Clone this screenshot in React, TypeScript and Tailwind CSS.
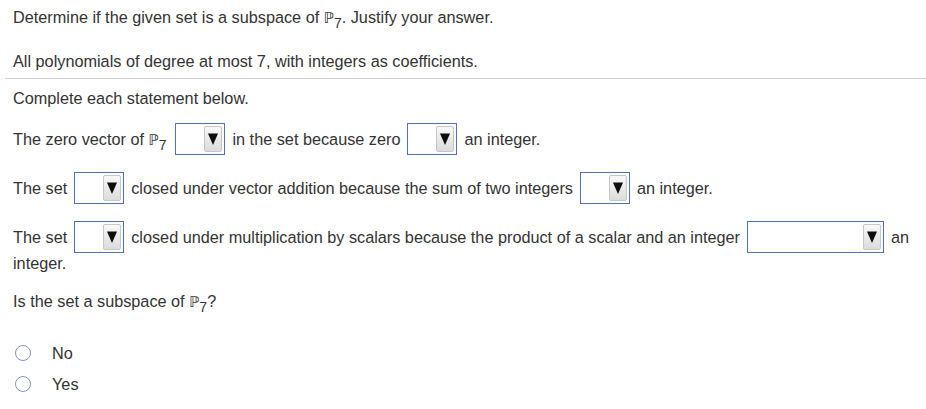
import React from "react";

function P7() {
  return (
    <span className="whitespace-nowrap">
      <span style={{ fontFamily: '"DejaVu Sans", sans-serif' }} className="text-[14.5px]">ℙ</span>
      <span className="relative top-[5px] text-[14px]">7</span>
    </span>
  );
}

function Dropdown({ width = "w-[50px]" }: { width?: string }) {
  return (
    <span
      className={`relative inline-flex h-[32px] ${width} shrink-0 items-center justify-end border border-[#5270b5] bg-white pr-[2px]`}
    >
      <span className="flex h-[26px] w-[18px] items-center justify-center rounded-[2px] border border-[#c6c6c6] bg-gradient-to-b from-[#f8f8f8] to-[#dcdcdc]">
        <svg width="10" height="12" viewBox="0 0 10 12">
          <polygon points="0,0.5 10,0.5 5,12" fill="#0d0d0d" />
        </svg>
      </span>
    </span>
  );
}

function Radio({ label }: { label: string }) {
  return (
    <div className="flex h-[31px] items-center">
      <span className="ml-[15px] h-[16px] w-[16px] rounded-full border-[1.5px] border-[#8392d8] bg-white" />
      <span className="ml-[21px]">{label}</span>
    </div>
  );
}

export default function App() {
  return (
    <div
      className="h-[409px] w-[926px] overflow-hidden bg-white text-[16.25px] leading-[20px] text-[#333]"
      style={{ fontFamily: '"Liberation Sans", Arial, sans-serif' }}
    >
      <div className="px-[13px] pt-[7px]">
        Determine if the given set is a subspace of <P7 />. Justify your answer.
      </div>
      <div className="px-[13px] pt-[23px]">
        All polynomials of degree at most 7, with integers as coefficients.
      </div>
      <div className="ml-[5px] mt-[7px] h-px bg-[#cdd1da]" />

      <div className="px-[13px] pt-[9px]">Complete each statement below.</div>

      <div className="mt-[15px] flex h-[32px] items-center px-[13px]">
        <span>
          The zero vector of <P7 />
        </span>
        <span className="ml-[9px] mr-[7px] flex">
          <Dropdown />
        </span>
        <span>in the set because zero</span>
        <span className="ml-[7px] mr-[7px] flex">
          <Dropdown />
        </span>
        <span>an integer.</span>
      </div>

      <div className="mt-[17px] flex h-[32px] items-center px-[13px]">
        <span>The set</span>
        <span className="ml-[7px] mr-[7px] flex">
          <Dropdown />
        </span>
        <span>closed under vector addition because the sum of two integers</span>
        <span className="ml-[7px] mr-[7px] flex">
          <Dropdown />
        </span>
        <span>an integer.</span>
      </div>

      <div className="mt-[17px] flex h-[32px] items-center px-[13px]">
        <span>The set</span>
        <span className="ml-[7px] mr-[7px] flex">
          <Dropdown />
        </span>
        <span className="whitespace-nowrap">
          closed under multiplication by scalars because the product of a scalar and an integer
        </span>
        <span className="ml-[7px] mr-[7px] flex">
          <Dropdown width="w-[137px]" />
        </span>
        <span>an</span>
      </div>
      <div className="px-[13px]">integer.</div>

      <div className="px-[13px] pt-[18px]">
        Is the set a subspace of <P7 />?
      </div>

      <div className="mt-[25px]">
        <Radio label="No" />
        <Radio label="Yes" />
      </div>
    </div>
  );
}
